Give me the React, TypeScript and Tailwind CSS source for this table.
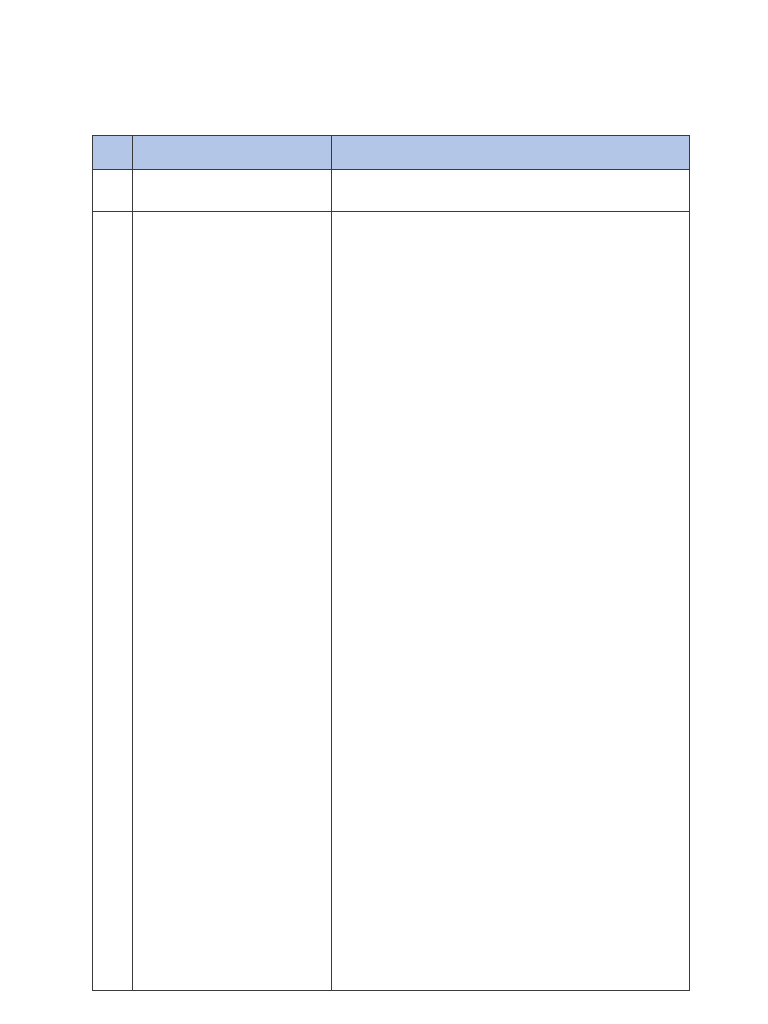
export default function App() {
  const cell = 'border border-[#3a3a3a] p-0';
  return (
    <div className="min-h-[1024px] w-[768px] bg-white pt-[135px] pl-[92px] font-['Liberation_Sans',sans-serif]">
      <table className="w-[598px] table-fixed border-collapse">
        <colgroup>
          <col className="w-[40px]" />
          <col className="w-[199px]" />
          <col />
        </colgroup>
        <tbody>
          <tr className="h-[34px] bg-[#b4c6e7]">
            <td className={cell}></td>
            <td className={cell}></td>
            <td className={cell}></td>
          </tr>
          <tr className="h-[42px]">
            <td className={cell}></td>
            <td className={cell}></td>
            <td className={cell}></td>
          </tr>
          <tr className="h-[779px]">
            <td className={cell}></td>
            <td className={cell}></td>
            <td className={cell}></td>
          </tr>
        </tbody>
      </table>
    </div>
  );
}
